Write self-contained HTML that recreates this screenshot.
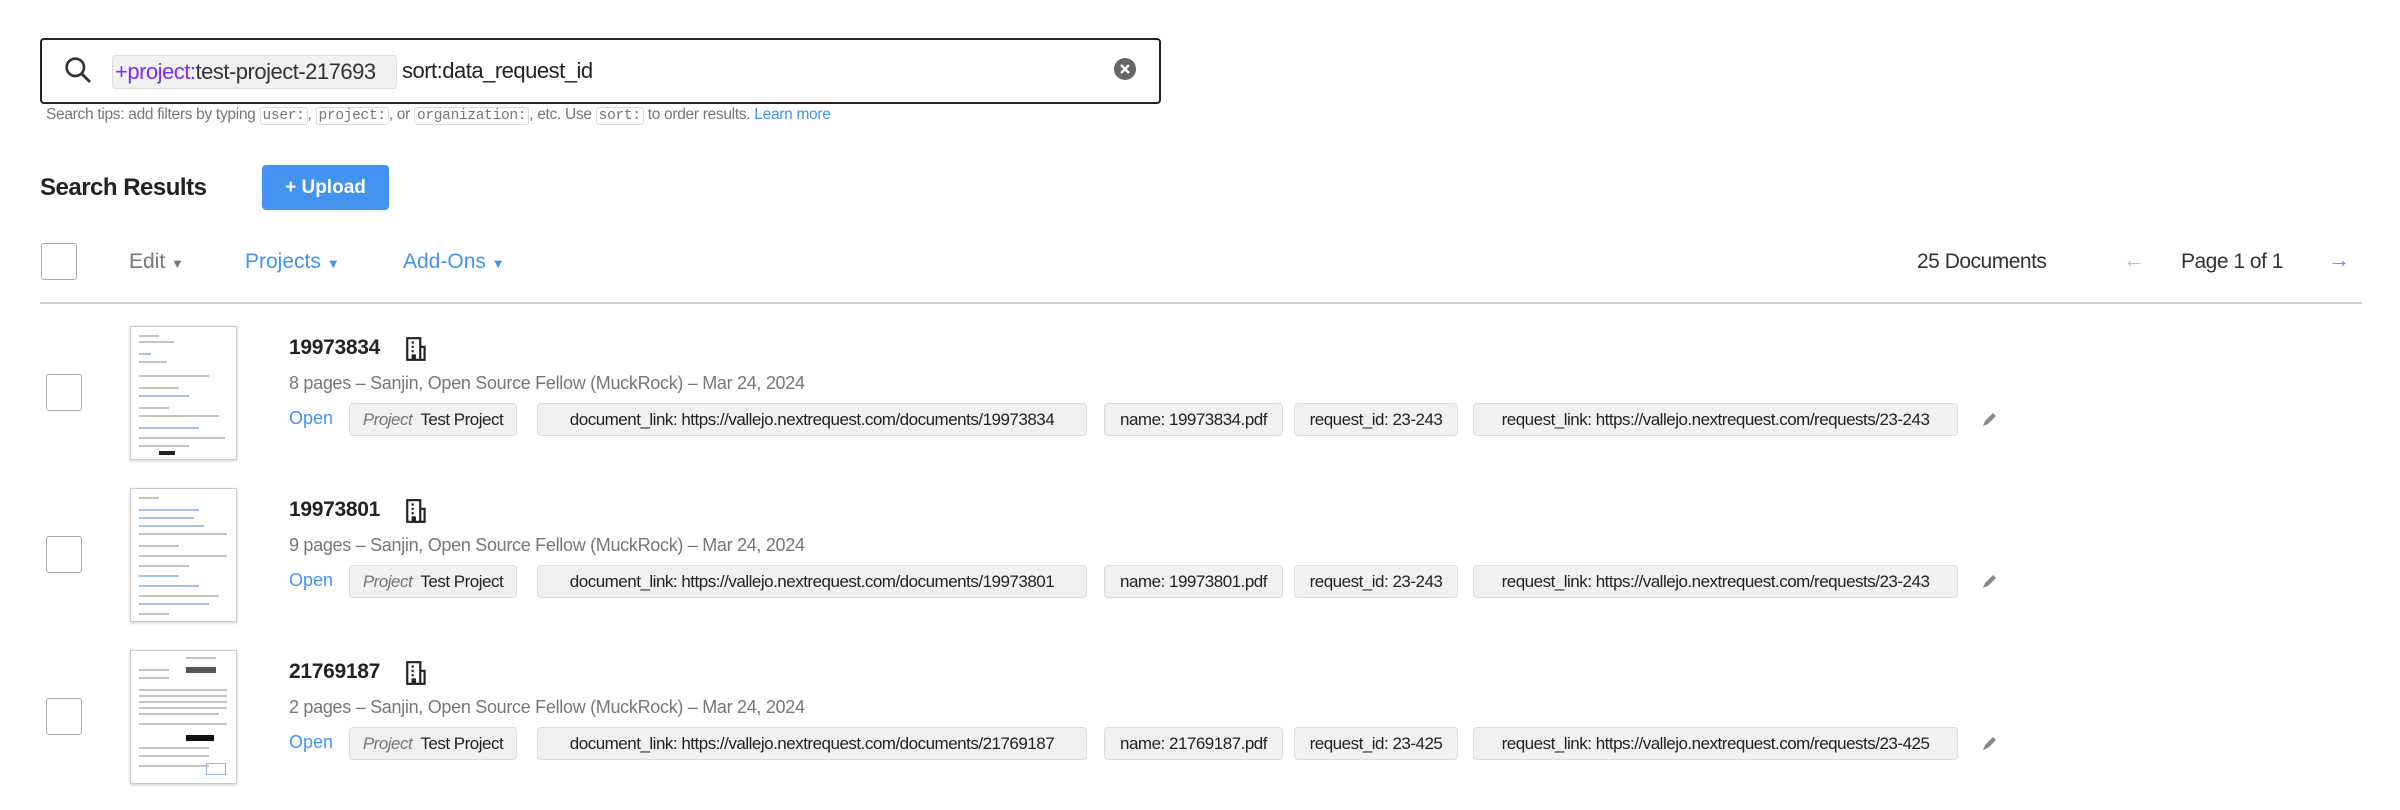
<!DOCTYPE html>
<html><head><meta charset="utf-8"><style>
*{box-sizing:border-box;margin:0;padding:0}
body{width:2400px;height:800px;background:#fff;font-family:"Liberation Sans",sans-serif;color:#222;position:relative;overflow:hidden}
.abs{position:absolute;white-space:nowrap}
.search{left:40px;top:38px;width:1121px;height:66px;border:2px solid #222;border-radius:4px}
.tok{left:112px;top:55px;width:285px;height:34px;background:#f1f1f3;border:1px solid #ddd;border-radius:4px;font-size:22px;line-height:32px;padding-left:2px;color:#333;letter-spacing:-0.5px}
.tips{left:46px;top:104px;font-size:15.5px;color:#777;line-height:22px;letter-spacing:-0.3px}
.tips code{font-family:"Liberation Mono",monospace;font-size:14.5px;border:1px solid #ddd;border-radius:3px;padding:0 2px;color:#777}
.chk{border:1.5px solid #aaa;border-radius:3px;background:#fff}
.chip{position:absolute;height:33px;background:#f1f1f1;border:1px solid #ddd;border-radius:4px;font-size:17px;line-height:31px;text-align:center;color:#222;overflow:hidden;letter-spacing:-0.5px;white-space:nowrap}
.row{position:absolute;left:0;width:2400px;height:160px}
.thumb{position:absolute;left:130px;top:0;width:107px;height:134px;border:1px solid #ccc;box-shadow:0 1px 3px rgba(0,0,0,.2);background:#fff;overflow:hidden}
.ln{position:absolute;left:8px;height:2px;background:#c4c4c4}
.ln.b{background:#a8c2ee}
.title{position:absolute;left:289px;top:10px;font-size:21px;font-weight:bold;letter-spacing:-0.3px}
.meta{position:absolute;left:289px;top:47px;font-size:18px;color:#777;letter-spacing:-0.3px;white-space:nowrap}
.open{position:absolute;left:289px;top:82px;font-size:18px;color:#4294f0}
</style></head><body>
<div class="abs search"></div>
<svg class="abs" style="left:62px;top:54px" width="32" height="32" viewBox="0 0 24 24"><circle cx="10" cy="10" r="6.5" fill="none" stroke="#333" stroke-width="2"/><path d="M15 15l6 6" stroke="#333" stroke-width="2.2"/></svg>
<div class="abs tok"><span style="color:#7b2ff7">+project:</span>test-project-217693</div>
<div class="abs" style="left:402px;top:55px;font-size:22px;line-height:32px;letter-spacing:-0.5px">sort:data_request_id</div>
<svg class="abs" style="left:1113px;top:57px" width="24" height="24" viewBox="0 0 24 24"><circle cx="12" cy="12" r="11" fill="#666"/><path d="M8 8l8 8M16 8l-8 8" stroke="#fff" stroke-width="2.4"/></svg>
<div class="abs tips">Search tips: add filters by typing <code>user:</code>, <code>project:</code>, or <code>organization:</code>, etc. Use <code>sort:</code> to order results. <span style="color:#4294f0">Learn more</span></div>
<div class="abs" style="left:40px;top:174px;font-size:24px;font-weight:bold;letter-spacing:-0.5px">Search Results</div>
<div class="abs" style="left:262px;top:165px;width:127px;height:45px;background:#4294f0;border-radius:4px;color:#fff;font-weight:bold;font-size:19px;line-height:45px;text-align:center">+ Upload</div>
<div class="abs chk" style="left:41px;top:243px;width:36px;height:37px"></div>
<div class="abs" style="left:129px;top:250px;font-size:21px;color:#777">Edit <span style="font-size:13px">▼</span></div>
<div class="abs" style="left:245px;top:250px;font-size:21px;color:#4294f0">Projects <span style="font-size:13px">▼</span></div>
<div class="abs" style="left:403px;top:250px;font-size:21px;color:#4294f0">Add-Ons <span style="font-size:13px">▼</span></div>
<div class="abs" style="left:1917px;top:250px;font-size:21px;color:#333;letter-spacing:-0.5px">25 Documents</div>
<div class="abs" style="left:2123px;top:247px;font-size:22px;color:#bbb">←</div>
<div class="abs" style="left:2181px;top:250px;font-size:21px;color:#333;letter-spacing:-0.5px">Page 1 of 1</div>
<div class="abs" style="left:2328px;top:247px;font-size:22px;color:#4294f0">→</div>
<div class="abs" style="left:40px;top:302px;width:2322px;height:2px;background:#ccc"></div>

<!-- row 1 -->
<div class="row" style="top:326px">
  <div class="abs chk" style="left:46px;top:48px;width:36px;height:37px"></div>
  <div class="thumb">
    <div class="ln" style="top:8px;width:20px"></div><div class="ln" style="top:14px;width:35px"></div><div class="ln b" style="top:26px;width:12px"></div><div class="ln" style="top:34px;width:28px"></div><div class="ln" style="top:48px;width:70px"></div><div class="ln" style="top:60px;width:40px"></div><div class="ln b" style="top:68px;width:50px"></div><div class="ln" style="top:80px;width:30px"></div><div class="ln" style="top:88px;width:80px"></div><div class="ln b" style="top:100px;width:60px"></div><div class="ln" style="top:110px;width:86px"></div><div class="ln" style="top:118px;width:50px"></div><div class="ln" style="top:124px;left:28px;width:16px;height:4px;background:#222"></div>
  </div>
  <div class="title">19973834</div>
  <svg class="abs" style="left:404px;top:10px" width="26" height="26" viewBox="0 0 24 24" fill="none" stroke="#222" stroke-width="2"><rect x="3" y="2" width="12" height="20"/><path d="M15 10h4v12h-4M7 6h2M11 6h0M7 10h2M11 10h0M7 14h2M11 14h0M8 22v-4h2v4"/></svg>
  <div class="meta">8 pages – Sanjin, Open Source Fellow (MuckRock) – Mar 24, 2024</div>
  <div class="open">Open</div>
  <div class="chip" style="left:349px;top:77px;width:168px"><i style="color:#777">Project</i>&nbsp; Test Project</div>
  <div class="chip" style="left:537px;top:77px;width:550px">document_link: https://vallejo.nextrequest.com/documents/19973834</div>
  <div class="chip" style="left:1104px;top:77px;width:179px">name: 19973834.pdf</div>
  <div class="chip" style="left:1294px;top:77px;width:164px">request_id: 23-243</div>
  <div class="chip" style="left:1473px;top:77px;width:485px">request_link: https://vallejo.nextrequest.com/requests/23-243</div>
  <svg class="abs" style="left:1979px;top:84px" width="20" height="20" viewBox="0 0 20 20"><path d="M4 16l2-5 8-8 3 3-8 8z" fill="#888"/></svg>
</div>

<!-- row 2 -->
<div class="row" style="top:488px">
  <div class="abs chk" style="left:46px;top:48px;width:36px;height:37px"></div>
  <div class="thumb">
    <div class="ln" style="top:8px;width:20px"></div><div class="ln b" style="top:20px;width:60px"></div><div class="ln b" style="top:28px;width:55px"></div><div class="ln b" style="top:36px;width:65px"></div><div class="ln" style="top:44px;width:88px"></div><div class="ln" style="top:56px;width:40px"></div><div class="ln" style="top:66px;width:88px"></div><div class="ln" style="top:76px;width:50px"></div><div class="ln b" style="top:86px;width:40px"></div><div class="ln b" style="top:96px;width:60px"></div><div class="ln" style="top:106px;width:80px"></div><div class="ln b" style="top:114px;width:70px"></div><div class="ln" style="top:124px;width:30px"></div>
  </div>
  <div class="title">19973801</div>
  <svg class="abs" style="left:404px;top:10px" width="26" height="26" viewBox="0 0 24 24" fill="none" stroke="#222" stroke-width="2"><rect x="3" y="2" width="12" height="20"/><path d="M15 10h4v12h-4M7 6h2M11 6h0M7 10h2M11 10h0M7 14h2M11 14h0M8 22v-4h2v4"/></svg>
  <div class="meta">9 pages – Sanjin, Open Source Fellow (MuckRock) – Mar 24, 2024</div>
  <div class="open">Open</div>
  <div class="chip" style="left:349px;top:77px;width:168px"><i style="color:#777">Project</i>&nbsp; Test Project</div>
  <div class="chip" style="left:537px;top:77px;width:550px">document_link: https://vallejo.nextrequest.com/documents/19973801</div>
  <div class="chip" style="left:1104px;top:77px;width:179px">name: 19973801.pdf</div>
  <div class="chip" style="left:1294px;top:77px;width:164px">request_id: 23-243</div>
  <div class="chip" style="left:1473px;top:77px;width:485px">request_link: https://vallejo.nextrequest.com/requests/23-243</div>
  <svg class="abs" style="left:1979px;top:84px" width="20" height="20" viewBox="0 0 20 20"><path d="M4 16l2-5 8-8 3 3-8 8z" fill="#888"/></svg>
</div>

<!-- row 3 -->
<div class="row" style="top:650px">
  <div class="abs chk" style="left:46px;top:48px;width:36px;height:37px"></div>
  <div class="thumb">
    <div class="ln" style="left:55px;top:6px;width:30px"></div><div class="ln" style="left:55px;top:16px;width:30px;height:6px;background:#555"></div><div class="ln" style="top:18px;width:30px"></div><div class="ln" style="top:26px;width:30px"></div><div class="ln" style="top:38px;width:88px"></div><div class="ln" style="top:44px;width:88px"></div><div class="ln" style="top:50px;width:88px"></div><div class="ln" style="top:56px;width:88px"></div><div class="ln" style="top:62px;width:80px"></div><div class="ln" style="top:72px;width:88px"></div><div class="ln" style="left:55px;top:84px;width:28px;height:6px;background:#111"></div><div class="ln" style="top:96px;width:70px"></div><div class="ln" style="top:104px;width:70px"></div><div class="ln" style="top:114px;width:70px"></div><div class="ln b" style="left:75px;top:112px;width:20px;height:12px;background:none;border:1px solid #9ab7e8"></div>
  </div>
  <div class="title">21769187</div>
  <svg class="abs" style="left:404px;top:10px" width="26" height="26" viewBox="0 0 24 24" fill="none" stroke="#222" stroke-width="2"><rect x="3" y="2" width="12" height="20"/><path d="M15 10h4v12h-4M7 6h2M11 6h0M7 10h2M11 10h0M7 14h2M11 14h0M8 22v-4h2v4"/></svg>
  <div class="meta">2 pages – Sanjin, Open Source Fellow (MuckRock) – Mar 24, 2024</div>
  <div class="open">Open</div>
  <div class="chip" style="left:349px;top:77px;width:168px"><i style="color:#777">Project</i>&nbsp; Test Project</div>
  <div class="chip" style="left:537px;top:77px;width:550px">document_link: https://vallejo.nextrequest.com/documents/21769187</div>
  <div class="chip" style="left:1104px;top:77px;width:179px">name: 21769187.pdf</div>
  <div class="chip" style="left:1294px;top:77px;width:164px">request_id: 23-425</div>
  <div class="chip" style="left:1473px;top:77px;width:485px">request_link: https://vallejo.nextrequest.com/requests/23-425</div>
  <svg class="abs" style="left:1979px;top:84px" width="20" height="20" viewBox="0 0 20 20"><path d="M4 16l2-5 8-8 3 3-8 8z" fill="#888"/></svg>
</div>
</body></html>
